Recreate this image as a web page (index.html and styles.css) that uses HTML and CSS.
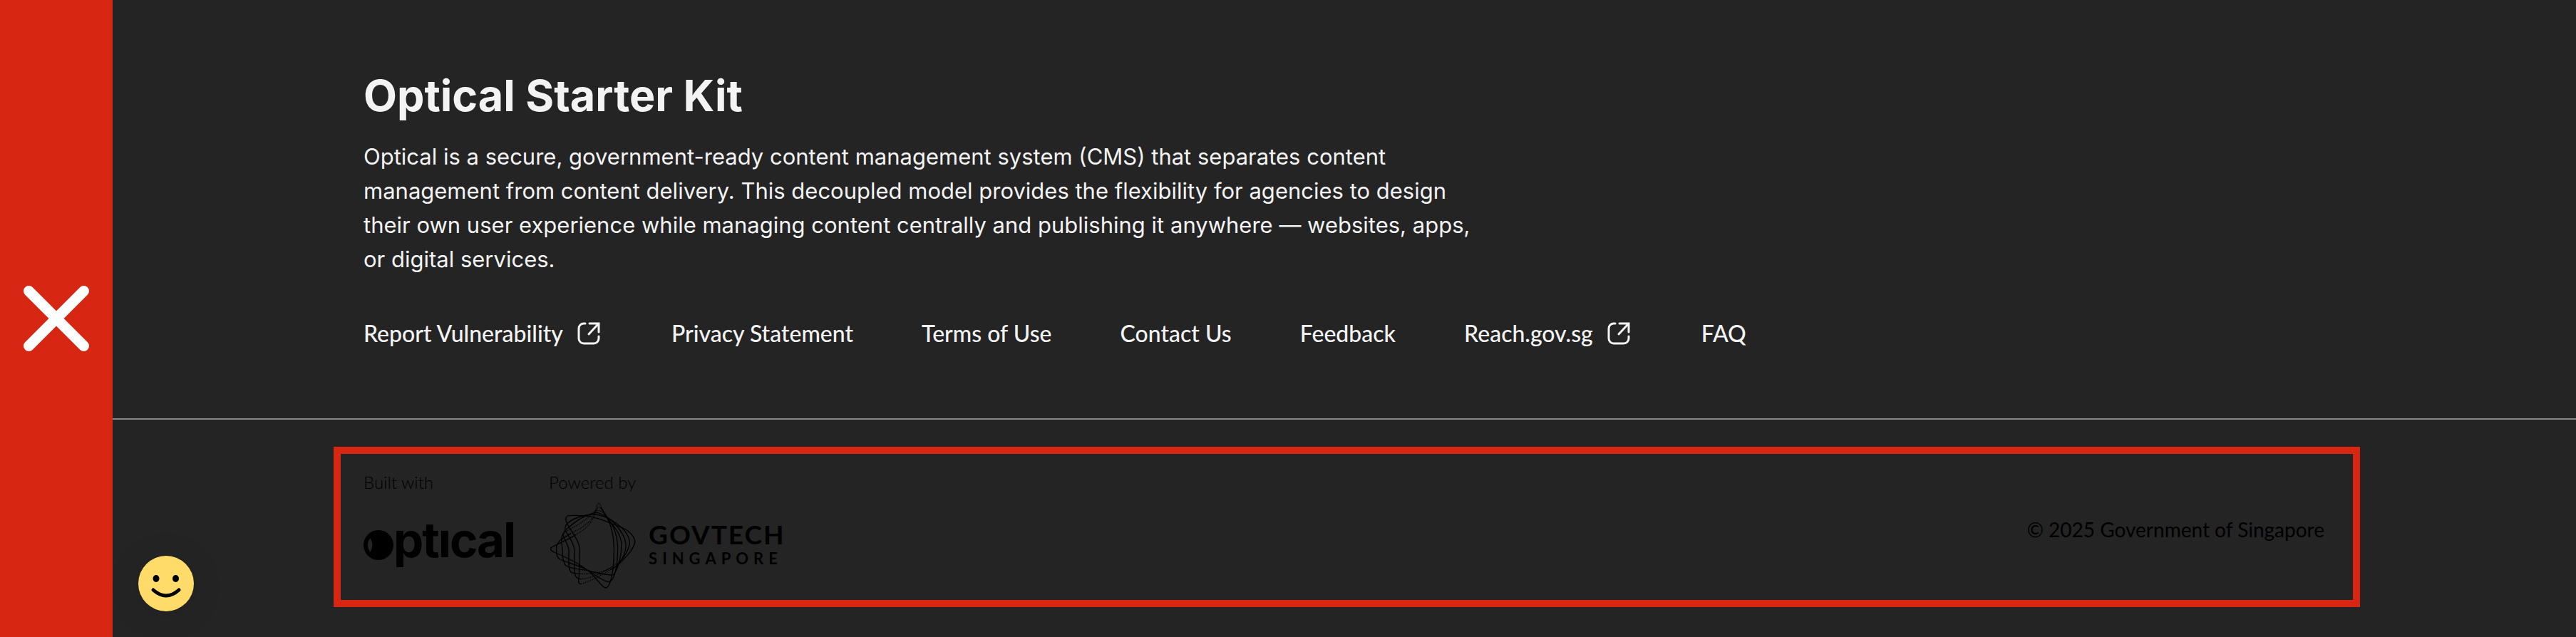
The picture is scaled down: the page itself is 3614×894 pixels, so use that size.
FILE: index.html
```
<!DOCTYPE html>
<html lang="en">
<head>
    <meta charset="UTF-8">
    <meta name="viewport" content="width=device-width, initial-scale=1.0">
    <title>Optical Starter Kit</title>
    <link rel="stylesheet" href="styles.css">
</head>
<body>
    <div class="page">
        <aside class="status-bar">
            <svg class="cross" viewBox="0 0 94 94" role="img" aria-label="Incorrect">
                <path d="M8.500 8.500L85.500 85.500M85.500 8.500L8.500 85.500"/>
            </svg>
        </aside>

        <footer class="footer">
            <section class="footer-top">
                <h2>Optical Starter Kit</h2>
                <p class="description">Optical is a secure, government-ready content management system (CMS) that separates content management from content delivery. This decoupled model provides the flexibility for agencies to design their own user experience while managing content centrally and publishing it anywhere — websites, apps, or digital services.</p>
                <nav class="links">
                    <a href="#">Report Vulnerability
                        <svg class="external" viewBox="0 0 40 40"><path d="M15 6h-2a7 7 0 0 0-7 7v14a7 7 0 0 0 7 7h14a7 7 0 0 0 7-7v-3M21 6h13v12M33 7L20 21"/></svg>
                    </a>
                    <a href="#">Privacy Statement</a>
                    <a href="#">Terms of Use</a>
                    <a href="#">Contact Us</a>
                    <a href="#">Feedback</a>
                    <a href="#">Reach.gov.sg
                        <svg class="external" viewBox="0 0 40 40"><path d="M15 6h-2a7 7 0 0 0-7 7v14a7 7 0 0 0 7 7h14a7 7 0 0 0 7-7v-3M21 6h13v12M33 7L20 21"/></svg>
                    </a>
                    <a href="#">FAQ</a>
                </nav>
            </section>

            <section class="footer-bottom">
                <div class="highlight">
                    <div class="credit">
                        <span class="credit-label">Built with</span>
                        <div class="optical-logo">
                            <svg class="optical-eye" viewBox="0 0 42 42">
                                <path fill-rule="evenodd" d="M21 0a21 21 0 1 0 0 42a21 21 0 1 0 0-42zM9 11q-6 10 0 20q7-10 0-20z"/>
                            </svg>
                            <span class="optical-name">ptıcal</span>
                        </div>
                    </div>
                    <div class="credit">
                        <span class="credit-label">Powered by</span>
                        <div class="govtech-logo">
                            <svg class="govtech-mark" viewBox="18 9 372 372">
                                <!-- solid strands -->
                                <path d="M238 38C262 80 290 110 292 210C293 290 280 376 256 375C238 372 215 325 180 300C130 265 100 250 40 225C24 218 20 208 34 202C60 188 100 172 130 152"/>
                                <path d="M240 40C262 85 304 110 308 205C308 290 292 352 268 350C240 345 215 320 180 300C140 278 95 270 65 255C48 245 50 225 50 205C52 180 75 165 110 148"/>
                                <path d="M245 50C265 95 322 130 324 195C322 260 300 322 284 321C250 320 220 312 180 302C140 295 105 295 88 280C74 262 76 235 75 215C72 180 66 160 82 142"/>
                                <path d="M280 298C300 290 340 250 342 200C345 140 260 58 215 58C170 65 130 95 90 130C60 160 98 175 102 215C102 255 98 290 110 308C125 318 140 314 150 316"/>
                                <path d="M305 280C320 262 352 230 358 190C360 130 270 70 210 66C160 68 120 80 92 108C70 140 126 170 126 220C126 265 122 300 130 325Q138 338 152 338"/>
                                <path d="M155 358Q143 362 143 345C148 300 148 250 148 215C148 170 95 120 90 90Q88 70 105 71C160 68 210 76 250 92C290 108 330 120 350 135Q382 160 380 185C370 225 330 255 300 290"/>
                                <!-- dotted strands -->
                                <g class="dotted">
                                    <path d="M130 152C180 125 210 90 216 50Q224 -5 240 38"/>
                                    <path d="M100 150C160 125 205 90 210 60Q226 20 242 45"/>
                                    <path d="M82 142C130 115 180 90 205 58Q225 40 245 58"/>
                                    <path d="M150 316C200 318 250 310 290 285"/>
                                    <path d="M152 338C200 335 250 310 300 275"/>
                                    <path d="M155 358C190 350 240 320 300 285"/>
                                </g>
                            </svg>
                            <div class="govtech-name">
                                <strong>GOVTECH</strong>
                                <span>SINGAPORE</span>
                            </div>
                        </div>
                    </div>
                    <p class="copyright">© 2025 Government of Singapore</p>
                </div>
            </section>
        </footer>
    </div>

    <button class="feedback" type="button" aria-label="Give feedback">
        <svg viewBox="0 0 78 78">
            <ellipse cx="25" cy="32" rx="4.500" ry="5"/>
            <ellipse cx="52.500" cy="32" rx="4.500" ry="5"/>
            <path d="M21 48Q39 64 57 48"/>
        </svg>
    </button>
</body>
</html>
```
FILE: styles.css
```
* {
    box-sizing: border-box;
}
body {
    margin: 0;
    background-color: #242424;
    color: #f3f3f3;
    font-family: Lato, sans-serif;
}
.page {
    display: flex;
    min-height: 100vh;
}
.status-bar {
    display: flex;
    align-items: center;
    justify-content: center;
    width: 158px;
    background-color: #d72611;
}
.cross {
    width: 94px;
    fill: none;
    stroke: white;
    stroke-width: 15;
    stroke-linecap: round;
}
.footer {
    flex: 1;
}
.footer-top {
    padding: 96px 352px 95px;
    border-bottom: 2px solid #888;
}
h2 {
    margin: 0 0 24px;
    font-family: Inter, sans-serif;
    font-size: 61px;
    line-height: 76px;
    font-weight: 700;
}
.description {
    max-width: 1560px;
    margin: 0 0 56px;
    font-family: Inter, sans-serif;
    font-size: 31px;
    line-height: 48px;
}
.links {
    display: flex;
    flex-wrap: wrap;
    gap: 96px;
}
.links a {
    display: flex;
    align-items: center;
    gap: 16px;
    color: inherit;
    font-size: 32px;
    line-height: 48px;
    font-weight: 500;
    text-decoration: none;
}
.external {
    width: 40px;
    height: 40px;
    fill: none;
    stroke: currentColor;
    stroke-width: 3;
    stroke-linecap: round;
}
.footer-bottom {
    padding: 38px 303px 40px 310px;
}
.highlight {
    display: flex;
    gap: 48px;
    padding: 22px 40px 15px 32px;
    border: 10px solid #d72611;
    color: black;
}
.credit {
    display: flex;
    flex-direction: column;
    gap: 8px;
}
.credit-label {
    font-size: 24px;
    line-height: 36px;
    font-weight: 300;
}
.optical-logo {
    display: flex;
    align-items: center;
    height: 124px;
}
.optical-eye {
    width: 42px;
    height: 42px;
}
.optical-name {
    padding-bottom: 14px;
    font-family: Inter, sans-serif;
    font-size: 67px;
    line-height: 72px;
    font-weight: 700;
    letter-spacing: -2px;
}
.govtech-logo {
    display: flex;
    align-items: center;
    gap: 16px;
}
.govtech-mark {
    width: 124px;
    height: 124px;
    fill: none;
    stroke: black;
    stroke-width: 4;
}
.dotted {
    stroke-dasharray: 4 4;
}
.govtech-name {
    display: flex;
    flex-direction: column;
}
.govtech-name strong {
    font-size: 37px;
    line-height: 38px;
    letter-spacing: 2px;
}
.govtech-name span {
    font-size: 22px;
    line-height: 30px;
    font-weight: 700;
    letter-spacing: 7px;
}
.copyright {
    align-self: center;
    margin: 0 0 0 auto;
    font-size: 28px;
    line-height: 40px;
}
.feedback {
    position: fixed;
    left: 194px;
    bottom: 36px;
    width: 78px;
    height: 78px;
    padding: 0;
    border: none;
    border-radius: 50%;
    background-color: #ffdb69;
    box-shadow: 0 4px 48px rgba(0, 0, 0, 0.1);
    cursor: pointer;
}
.feedback svg {
    display: block;
}
.feedback path {
    fill: none;
    stroke: black;
    stroke-width: 5;
    stroke-linecap: round;
}
```
